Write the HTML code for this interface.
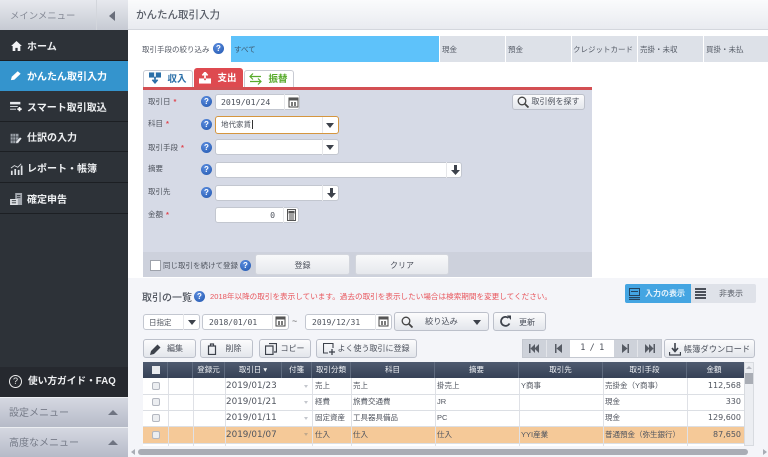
<!DOCTYPE html>
<html lang="ja"><head><meta charset="utf-8"><title>かんたん取引入力</title>
<style>
*{box-sizing:border-box}
html,body{margin:0;padding:0;width:768px;height:457px;overflow:hidden;background:#fff}
body{font-family:"Liberation Sans","Noto Sans CJK JP",sans-serif;color:#4a4f5a;font-size:7.5px;position:relative}
.a{position:absolute;white-space:nowrap}
.nav{position:absolute;left:0;width:128px;height:30px;background:#2d3238;color:#eef0f2;font-weight:bold;font-size:10px;line-height:29px;border-bottom:1px solid #1c1f23}
.nav span{position:absolute;left:27px;top:2px;white-space:nowrap}
.nav svg{position:absolute;left:10px}
.hdg{position:absolute;left:0;width:128px;background:linear-gradient(#d5d8e1,#b6bbc8);color:#767b88;font-size:10px;line-height:31px;padding-left:9px;border-top:1px solid #eceef2}
.tri{position:absolute;width:0;height:0;border-left:5px solid transparent;border-right:5px solid transparent;border-bottom:5px solid #6f7481}
.f{position:absolute;height:26px;background:#dde1e8;line-height:28px;padding-left:2px;font-size:7.5px;color:#555b66;white-space:nowrap}
.lb{position:absolute;left:148px;font-size:7.5px;color:#50555f;white-space:nowrap}
.lb b{color:#e0454f;margin-left:3px}
.q{position:absolute;width:11px;height:11px;border-radius:50%;background:radial-gradient(circle at 40% 30%,#5d8ee0,#1f55ad);color:#fff;font-size:8px;font-weight:bold;line-height:11px;text-align:center}
.in{position:absolute;height:16px;background:#fff;border:1px solid #c3c7d0;border-radius:3px;font-size:8.2px;line-height:15px;color:#4c515b;font-family:"DejaVu Sans Mono","Noto Sans CJK JP",monospace}
.sep{position:absolute;width:1px;background:#e6e7ea}
.dd{position:absolute;width:0;height:0;border-left:4px solid transparent;border-right:4px solid transparent;border-top:5px solid #3d424b}
.btn{position:absolute;background:linear-gradient(#fcfcfd,#e3e6ec);border:1px solid #bcc0ca;border-radius:3px;font-size:8px;color:#4a4f5a;text-align:center;white-space:nowrap}
.th{position:absolute;top:362px;height:16px;line-height:16px;color:#f2f4f7;font-size:7.5px;text-align:center;border-right:1px solid #5f6b7f}
.c{position:absolute;font-size:7.5px;line-height:16px;white-space:nowrap;color:#50555f}
.d{position:absolute;left:226px;width:60px;font-size:8.8px;line-height:16px;color:#50555f;font-family:"DejaVu Sans",sans-serif}
.m{position:absolute;right:27px;font-size:8px;line-height:16px;color:#50555f;text-align:right;font-family:"DejaVu Sans",sans-serif}
.cb{position:absolute;left:152px;width:8px;height:8px;background:#eceef1;border:1px solid #b3b7c0;border-radius:2px}
.vl{position:absolute;top:378px;height:68px;width:1px;background:#dfe1e6}
.hl{position:absolute;left:143px;width:601px;height:1px;background:#dcdfe4}
.tab{position:absolute;font-weight:bold;font-size:9.5px;text-align:center}
</style></head><body>

<!-- sidebar -->
<div class="a" style="left:0;top:0;width:128px;height:457px;background:#2d3238"></div>
<div class="a" style="left:0;top:0;width:128px;height:30px;background:linear-gradient(#e7e9ee,#c6cad3);color:#868b97;font-size:9.4px;line-height:32px;padding-left:10px">メインメニュー</div>
<div class="a" style="left:96px;top:0;width:1px;height:30px;background:#d3d6dc"></div>
<div class="a" style="left:109px;top:11px;border-top:5px solid transparent;border-bottom:5px solid transparent;border-right:6px solid #6a6f7b"></div>

<div class="nav" style="top:31px;"><svg style="left:11px;top:10px" width="11" height="10" viewBox="0 0 14 13"><path d="M7 0L14 6.5H12V13H8.5V9H5.5V13H2V6.5H0Z" fill="#f3f4f6"/></svg><span>ホーム</span></div>
<div class="nav" style="top:61px;background:#3494cd;border:0;color:#fff"><svg style="top:9px" width="12" height="11" viewBox="0 0 14 13"><path d="M1 12L2 8L9 1.500L12.500 4.500L5 11.500Z" fill="#fff"/></svg><span>かんたん取引入力</span></div>
<div class="nav" style="top:92px;"><svg style="top:9px" width="13" height="12" viewBox="0 0 15 14"><path d="M0 1H12V4H0ZM0 6H9V7H0ZM0 9H7V10H0Z" fill="#e8eaee"/><path d="M11 7V12M8.500 9.500H13.500" stroke="#fff" stroke-width="2"/></svg><span>スマート取引取込</span></div>
<div class="nav" style="top:122px;"><svg style="top:11px" width="13" height="11" viewBox="0 0 15 14"><path d="M0 1H10V13H0Z" fill="#9aa0a8"/><path d="M3 1V13M6.500 1V13M0 5H10M0 9H10" stroke="#2d3238" stroke-width=".7"/><path d="M7 13L8 10L12 5.500L14 7L10 12Z" fill="#e8eaee"/></svg><span>仕訳の入力</span></div>
<div class="nav" style="top:153px;"><svg style="top:10px" width="13" height="12" viewBox="0 0 15 14"><path d="M1 9H3V14H1ZM5 7H7V14H5ZM9 8H11V14H9ZM12.500 3H14.500V14H12.500Z" fill="#dfe2e6"/><path d="M1 6L5 3L9 5L13 1" stroke="#dfe2e6" fill="none"/></svg><span>レポート・帳簿</span></div>
<div class="nav" style="top:184px;"><svg style="top:9px" width="13" height="12" viewBox="0 0 15 14"><path d="M6 0H14V14H6Z" fill="#a2a7ae"/><path d="M0 7H9V14H0Z" fill="#dfe2e6"/><path d="M2 9H7M2 11.500H7M8 3H12M8 5H12" stroke="#2d3238"/></svg><span>確定申告</span></div>

<div class="a" style="left:0;top:367px;width:128px;height:30px;background:#26292f;color:#f0f1f3;font-weight:bold;font-size:9.7px;line-height:30px;padding-left:28px">使い方ガイド・FAQ</div>
<div class="a" style="left:9px;top:375px;width:13px;height:13px;border:1.500px solid #eee;border-radius:50%;color:#eee;font-size:9px;line-height:10px;text-align:center">?</div>
<div class="hdg" style="top:397px;height:30px">設定メニュー</div><div class="tri" style="left:108px;top:410px"></div>
<div class="hdg" style="top:427px;height:30px">高度なメニュー</div><div class="tri" style="left:108px;top:440px"></div>

<!-- top bar -->
<div class="a" style="left:128px;top:0;width:640px;height:30px;background:linear-gradient(#fafbfc,#e9ebf0);border-bottom:1px solid #d4d7dd;color:#565b66;font-size:10.500px;font-weight:500;line-height:31px;padding-left:8px">かんたん取引入力</div>

<!-- filter -->
<div class="a" style="left:142px;top:44px;font-size:7.5px;color:#565b66">取引手段の絞り込み</div>
<div class="q" style="left:213px;top:43px">?</div>
<div class="f" style="left:231px;top:36px;width:208px;background:#5ec2fa;color:#3e5a70;padding-left:3px">すべて</div>
<div class="f" style="left:440px;top:36px;width:65px">現金</div>
<div class="f" style="left:506px;top:36px;width:65px">預金</div>
<div class="f" style="left:572px;top:36px;width:65px;padding-left:1px">クレジットカード</div>
<div class="f" style="left:638px;top:36px;width:65px">売掛・未収</div>
<div class="f" style="left:704px;top:36px;width:64px">買掛・未払</div>

<!-- tabs -->
<div class="tab" style="left:143px;top:70px;width:50px;height:18px;background:#fff;border:1px solid #c8cbd3;border-bottom:0;border-radius:3px 3px 0 0;color:#2a6fa8;line-height:18px;padding-left:18px">収入</div>
<svg class="a" style="left:149px;top:72px" width="12" height="12" viewBox="0 0 14 13"><path d="M0 0H14V6H0Z" fill="#2a6fa8"/><path d="M7 2V12M4 8.500L7 12L10 8.500" stroke="#2a6fa8" stroke-width="2" fill="none"/><path d="M7 0V5" stroke="#fff" stroke-width="2"/></svg>
<div class="tab" style="left:194px;top:68px;width:49px;height:20px;background:#de4a50;border-radius:3px 3px 0 0;color:#fff;line-height:22px;padding-left:17px">支出</div>
<svg class="a" style="left:199px;top:72px" width="12" height="12" viewBox="0 0 14 13"><path d="M0 7H14V13H0Z" fill="#fff"/><path d="M7 0V9M4 3.500L7 0L10 3.500" stroke="#fff" stroke-width="2" fill="none"/><path d="M7 7V9" stroke="#de4a50" stroke-width="2"/></svg>
<div class="tab" style="left:244px;top:70px;width:50px;height:18px;background:#fff;border:1px solid #c8cbd3;border-bottom:0;border-radius:3px 3px 0 0;color:#58ab2c;line-height:18px;padding-left:18px">振替</div>
<svg class="a" style="left:249px;top:73px" width="13" height="12" viewBox="0 0 13 12"><path d="M1 3.500H12M4 .5L1 3.500L4 6.500M12 8.500H1M9 5.500L12 8.500L9 11.500" stroke="#58ab2c" stroke-width="1.200" fill="none"/></svg>

<!-- panel -->
<div class="a" style="left:143px;top:87px;width:449px;height:190px;background:#d6dae6;border-top:3px solid #d34f53"></div>
<div class="a" style="left:143px;top:252px;width:449px;height:25px;background:#cdd1dc"></div>

<div class="lb" style="top:96px">取引日<b>*</b></div><div class="q" style="left:201px;top:96px">?</div>
<div class="in" style="left:215px;top:94px;width:85px;padding-left:5px">2019/01/24</div><div class="sep" style="left:284px;top:94px;height:16px"></div>
<svg class="a" style="left:288px;top:97px" width="11" height="11" viewBox="0 0 11 11"><path d="M1 1H10V10H1Z" fill="#fff" stroke="#444"/><path d="M1 1H10V3.500H1Z" fill="#555"/><path d="M4 5V9M7 5V9" stroke="#333" stroke-width="1.300"/></svg>

<div class="lb" style="top:118px">科目<b>*</b></div><div class="q" style="left:201px;top:119px">?</div>
<div class="in" style="left:215px;top:116px;width:124px;height:18px;border:1.500px solid #d5963f;padding-left:5px;font-size:7.5px;line-height:15px;font-family:'Liberation Sans','Noto Sans CJK JP',sans-serif">地代家賃<span style="border-left:1px solid #333;margin-left:1px"></span></div>
<div class="sep" style="left:322px;top:117px;height:16px"></div><div class="dd" style="left:326px;top:123px"></div>

<div class="lb" style="top:142px">取引手段<b>*</b></div><div class="q" style="left:201px;top:142px">?</div>
<div class="in" style="left:215px;top:139px;width:124px"></div><div class="sep" style="left:322px;top:139px;height:16px"></div><div class="dd" style="left:326px;top:145px"></div>

<div class="lb" style="top:163px">摘要</div><div class="q" style="left:201px;top:164px">?</div>
<div class="in" style="left:215px;top:162px;width:247px"></div><div class="sep" style="left:446px;top:162px;height:16px"></div>
<svg class="a" style="left:451px;top:165px" width="9" height="10" viewBox="0 0 9 10"><path d="M3 0H6V5H9L4.500 10L0 5H3Z" fill="#3d424b"/></svg>

<div class="lb" style="top:186px">取引先</div><div class="q" style="left:201px;top:187px">?</div>
<div class="in" style="left:215px;top:185px;width:124px"></div><div class="sep" style="left:322px;top:185px;height:16px"></div>
<svg class="a" style="left:327px;top:188px" width="9" height="10" viewBox="0 0 9 10"><path d="M3 0H6V5H9L4.500 10L0 5H3Z" fill="#3d424b"/></svg>

<div class="lb" style="top:209px">金額<b>*</b></div>
<div class="in" style="left:215px;top:207px;width:84px;text-align:right;padding-right:23px">0</div><div class="sep" style="left:283px;top:207px;height:16px"></div>
<svg class="a" style="left:287px;top:209px" width="9" height="12" viewBox="0 0 9 12"><path d="M.5.500H8.500V11.500H.5Z" fill="#eee" stroke="#555"/><path d="M2 2.500H7V4H2ZM2 6H7M2 8H7M2 10H7" stroke="#555" fill="#555"/></svg>

<div class="btn" style="left:512px;top:94px;width:73px;height:16px;line-height:14px;padding-left:14px">取引例を探す</div>
<svg class="a" style="left:517px;top:96px" width="12" height="12" viewBox="0 0 12 12"><circle cx="5" cy="5" r="3.800" fill="none" stroke="#444" stroke-width="1.300"/><path d="M8 8L11.500 11.500" stroke="#444" stroke-width="1.800"/></svg>

<div class="a" style="left:150px;top:260px;width:11px;height:11px;background:#fff;border:1px solid #9ea2ab"></div>
<div class="a" style="left:163px;top:260px;font-size:7.5px;color:#50555f">同じ取引を続けて登録</div>
<div class="q" style="left:240px;top:260px">?</div>
<div class="btn" style="left:255px;top:254px;width:95px;height:21px;line-height:21px;background:linear-gradient(#f8f9fa,#e6e8ed);border-color:#d2d5dc">登録</div>
<div class="btn" style="left:355px;top:254px;width:94px;height:21px;line-height:21px;background:linear-gradient(#f8f9fa,#e6e8ed);border-color:#d2d5dc">クリア</div>

<!-- list region -->
<div class="a" style="left:128px;top:278px;width:640px;height:179px;background:#f4f5f9"></div>
<div class="a" style="left:142px;top:289px;font-size:10px;font-weight:500;color:#4c515b">取引の一覧</div>
<div class="q" style="left:194px;top:291px">?</div>
<div class="a" style="left:210px;top:291px;font-size:7.6px;color:#e8555c">2018年以降の取引を表示しています。過去の取引を表示したい場合は検索期間を変更してください。</div>

<div class="a" style="left:625px;top:284px;width:66px;height:19px;background:#44a5e2;border-radius:2px 0 0 2px;color:#e6f2fb;font-size:8px;line-height:19px;padding-left:20px;font-weight:bold">入力の表示</div>
<svg class="a" style="left:629px;top:288px" width="11" height="12" viewBox="0 0 11 12"><path d="M.5.500H10.500V7.500H.5Z" fill="none" stroke="#24445f"/><path d="M0 9H11V10.200H0ZM0 11H11V12H0ZM2 3H9V4H2Z" fill="#24445f"/></svg>
<div class="a" style="left:691px;top:284px;width:65px;height:19px;background:#dfe2e9;border-radius:0 2px 2px 0;color:#50555f;font-size:8px;line-height:19px;padding-left:28px">非表示</div>
<svg class="a" style="left:695px;top:288px" width="11" height="11" viewBox="0 0 11 11"><path d="M0 0H11V2H0ZM0 3H11V5H0ZM0 6H11V8H0ZM0 9H11V11H0Z" fill="#4a4f59"/></svg>

<div class="in" style="left:143px;top:314px;width:57px;font-size:7.5px;padding-left:5px;line-height:15px;font-family:'Liberation Sans','Noto Sans CJK JP',sans-serif">日指定</div><div class="sep" style="left:183px;top:314px;height:16px"></div><div class="dd" style="left:188px;top:320px"></div>
<div class="in" style="left:202px;top:314px;width:87px;padding-left:6px;font-size:8px">2018/01/01</div><div class="sep" style="left:272px;top:314px;height:16px"></div>
<svg class="a" style="left:275px;top:316px" width="11" height="11" viewBox="0 0 11 11"><path d="M1 1H10V10H1Z" fill="#fff" stroke="#444"/><path d="M1 1H10V3.500H1Z" fill="#555"/><path d="M4 5V9M7 5V9" stroke="#333" stroke-width="1.300"/></svg>
<div class="a" style="left:292px;top:316px;font-size:9px;color:#666">~</div>
<div class="in" style="left:305px;top:314px;width:87px;padding-left:6px;font-size:8px">2019/12/31</div><div class="sep" style="left:375px;top:314px;height:16px"></div>
<svg class="a" style="left:378px;top:316px" width="11" height="11" viewBox="0 0 11 11"><path d="M1 1H10V10H1Z" fill="#fff" stroke="#444"/><path d="M1 1H10V3.500H1Z" fill="#555"/><path d="M4 5V9M7 5V9" stroke="#333" stroke-width="1.300"/></svg>
<div class="btn" style="left:394px;top:312px;width:95px;height:19px;line-height:18px;font-size:8.200px">絞り込み</div>
<svg class="a" style="left:401px;top:316px" width="12" height="12" viewBox="0 0 12 12"><circle cx="5" cy="5" r="3.800" fill="none" stroke="#444" stroke-width="1.300"/><path d="M8 8L11.500 11.500" stroke="#444" stroke-width="1.800"/></svg>
<div class="dd" style="left:473px;top:320px"></div>
<div class="btn" style="left:493px;top:312px;width:53px;height:19px;line-height:19px;padding-left:15px">更新</div>
<svg class="a" style="left:499px;top:315px" width="13" height="13" viewBox="0 0 13 13"><path d="M10.500 8.500A4.500 4.500 0 1 1 9.500 3" fill="none" stroke="#3d424b" stroke-width="1.800"/><path d="M8 0.500L12 .5V5Z" fill="#3d424b"/></svg>

<div class="btn" style="left:143px;top:339px;width:53px;height:19px;line-height:18px;padding-left:11px">編集</div>
<svg class="a" style="left:150px;top:344px" width="11" height="11" viewBox="0 0 11 11"><path d="M0 11L1 7L7.500 .5L10.500 3.500L4 10Z" fill="#3d424b"/></svg>
<div class="btn" style="left:200px;top:339px;width:53px;height:19px;line-height:18px;padding-left:14px">削除</div>
<svg class="a" style="left:207px;top:343px" width="10" height="12" viewBox="0 0 10 12"><path d="M1.500 3H8.500V11.500H1.500ZM3.500 3V1H6.500V3" fill="none" stroke="#3d424b" stroke-width="1.200"/></svg>
<div class="btn" style="left:259px;top:339px;width:52px;height:19px;line-height:18px;padding-left:15px">コピー</div>
<svg class="a" style="left:265px;top:343px" width="12" height="12" viewBox="0 0 12 12"><path d="M4 .5H11.500V9H9M.5 3H8V11.500H.5Z" fill="none" stroke="#3d424b" stroke-width="1.200"/></svg>
<div class="btn" style="left:316px;top:339px;width:101px;height:19px;line-height:18px;padding-left:14px">よく使う取引に登録</div>
<svg class="a" style="left:323px;top:343px" width="13" height="13" viewBox="0 0 13 13"><path d="M5 10H.5V.5H10V5" fill="none" stroke="#3d424b" stroke-width="1.100"/><path d="M9 6V12M6 9H12" stroke="#3d424b" stroke-width="1.300"/></svg>

<div class="a" style="left:522px;top:339px;width:140px;height:19px;background:#ced2da;border:1px solid #c4c8d0"></div>
<div class="a" style="left:570px;top:340px;width:44px;height:17px;background:#fff;font-size:8.500px;line-height:17px;text-align:center;font-family:'DejaVu Sans Mono',monospace;color:#4c515b;letter-spacing:-.4px">1 / 1</div>
<div class="a" style="left:546px;top:340px;width:1px;height:17px;background:#e3e5ea"></div>
<div class="a" style="left:637px;top:340px;width:1px;height:17px;background:#e3e5ea"></div>
<svg class="a" style="left:529px;top:344px" width="10" height="9" viewBox="0 0 10 9"><path d="M0 0H1.500V9H0ZM6 0V9L1.500 4.500ZM10 0V9L5.500 4.500Z" fill="#565b64"/></svg>
<svg class="a" style="left:555px;top:344px" width="7" height="9" viewBox="0 0 7 9"><path d="M0 0H1.500V9H0ZM7 0V9L1.500 4.500Z" fill="#565b64"/></svg>
<svg class="a" style="left:622px;top:344px" width="7" height="9" viewBox="0 0 7 9"><path d="M5.500 0H7V9H5.500ZM0 0V9L5.500 4.500Z" fill="#565b64"/></svg>
<svg class="a" style="left:645px;top:344px" width="10" height="9" viewBox="0 0 10 9"><path d="M8.500 0H10V9H8.500ZM4 0V9L8.500 4.500ZM0 0V9L4.500 4.500Z" fill="#565b64"/></svg>
<div class="btn" style="left:664px;top:339px;width:91px;height:19px;line-height:18px;padding-left:15px;font-size:8.300px">帳簿ダウンロード</div>
<svg class="a" style="left:669px;top:343px" width="12" height="13" viewBox="0 0 12 13"><path d="M6 0V7.500M3 5L6 8.500L9 5" stroke="#3d424b" stroke-width="1.600" fill="none"/><path d="M.5 9V12H11.500V9" stroke="#3d424b" stroke-width="1.300" fill="none"/></svg>

<!-- table -->
<div class="a" style="left:143px;top:378px;width:601px;height:68px;background:#fff"></div>
<div class="a" style="left:143px;top:427px;width:601px;height:16px;background:#f5c998"></div>
<div class="a" style="left:143px;top:362px;width:601px;height:16px;background:linear-gradient(#4f5b70,#364156)"></div>
<div class="th" style="left:143px;width:25px"></div>
<div class="a" style="left:152px;top:366px;width:8px;height:8px;background:#e8eaee"></div>
<div class="th" style="left:168px;width:25px"></div>
<div class="th" style="left:193px;width:32px">登録元</div>
<div class="th" style="left:225px;width:57px">取引日 ▾</div>
<div class="th" style="left:282px;width:30px">付箋</div>
<div class="th" style="left:312px;width:39px">取引分類</div>
<div class="th" style="left:351px;width:84px">科目</div>
<div class="th" style="left:435px;width:84px">摘要</div>
<div class="th" style="left:519px;width:84px">取引先</div>
<div class="th" style="left:603px;width:84px">取引手段</div>
<div class="th" style="left:687px;width:57px;border:0;padding-right:3px">金額</div>

<div class="vl" style="left:168px"></div><div class="vl" style="left:193px"></div><div class="vl" style="left:225px"></div><div class="vl" style="left:312px"></div><div class="vl" style="left:351px"></div><div class="vl" style="left:435px"></div><div class="vl" style="left:519px"></div><div class="vl" style="left:603px"></div><div class="vl" style="left:687px"></div>
<div class="hl" style="top:394px"></div><div class="hl" style="top:410px"></div><div class="hl" style="top:426px"></div><div class="hl" style="top:443px"></div>

<div class="cb" style="top:382px"></div><div class="d" style="top:378px">2019/01/23</div><div class="c" style="left:315px;top:378px">売上</div><div class="c" style="left:353px;top:378px">売上</div><div class="c" style="left:437px;top:378px">掛売上</div><div class="c" style="left:521px;top:378px">Y商事</div><div class="c" style="left:605px;top:378px">売掛金（Y商事）</div><div class="m" style="top:378px">112,568</div>
<div class="cb" style="top:398px"></div><div class="d" style="top:394px">2019/01/21</div><div class="c" style="left:315px;top:394px">経費</div><div class="c" style="left:353px;top:394px">旅費交通費</div><div class="c" style="left:437px;top:394px">JR</div><div class="c" style="left:605px;top:394px">現金</div><div class="m" style="top:394px">330</div>
<div class="cb" style="top:414px"></div><div class="d" style="top:410px">2019/01/11</div><div class="c" style="left:315px;top:410px">固定資産</div><div class="c" style="left:353px;top:410px">工具器具備品</div><div class="c" style="left:437px;top:410px">PC</div><div class="c" style="left:605px;top:410px">現金</div><div class="m" style="top:410px">129,600</div>
<div class="cb" style="top:431px"></div><div class="d" style="top:427px">2019/01/07</div><div class="c" style="left:315px;top:427px">仕入</div><div class="c" style="left:353px;top:427px">仕入</div><div class="c" style="left:437px;top:427px">仕入</div><div class="c" style="left:521px;top:427px">YYI産業</div><div class="c" style="left:605px;top:427px">普通預金（弥生銀行）</div><div class="m" style="top:427px">87,650</div>

<div class="a" style="left:304px;top:385px;border-left:2px solid transparent;border-right:2px solid transparent;border-top:3px solid #c4c7cd"></div>
<div class="a" style="left:304px;top:401px;border-left:2px solid transparent;border-right:2px solid transparent;border-top:3px solid #c4c7cd"></div>
<div class="a" style="left:304px;top:417px;border-left:2px solid transparent;border-right:2px solid transparent;border-top:3px solid #c4c7cd"></div>
<div class="a" style="left:304px;top:433px;border-left:2px solid transparent;border-right:2px solid transparent;border-top:3px solid #c0a88c"></div>

<!-- scrollbars -->
<div class="a" style="left:744px;top:362px;width:10px;height:84px;background:#eceef2;border:1px solid #d8dbe0"></div>
<div class="a" style="left:746px;top:366px;border-left:3px solid transparent;border-right:3px solid transparent;border-bottom:3px solid #b5b8c0"></div>
<div class="a" style="left:745px;top:373px;width:8px;height:11px;background:#a9adb5"></div>
<div class="a" style="left:128px;top:446px;width:640px;height:11px;background:#f4f5f9"></div>
<div class="a" style="left:131px;top:449px;border-top:3px solid transparent;border-bottom:3px solid transparent;border-right:4px solid #a9adb5"></div>
<div class="a" style="left:138px;top:449px;width:610px;height:6px;background:#a9adb5;border-radius:3px"></div>
<div class="a" style="left:763px;top:449px;border-top:3px solid transparent;border-bottom:3px solid transparent;border-left:4px solid #a9adb5"></div>
</body></html>
